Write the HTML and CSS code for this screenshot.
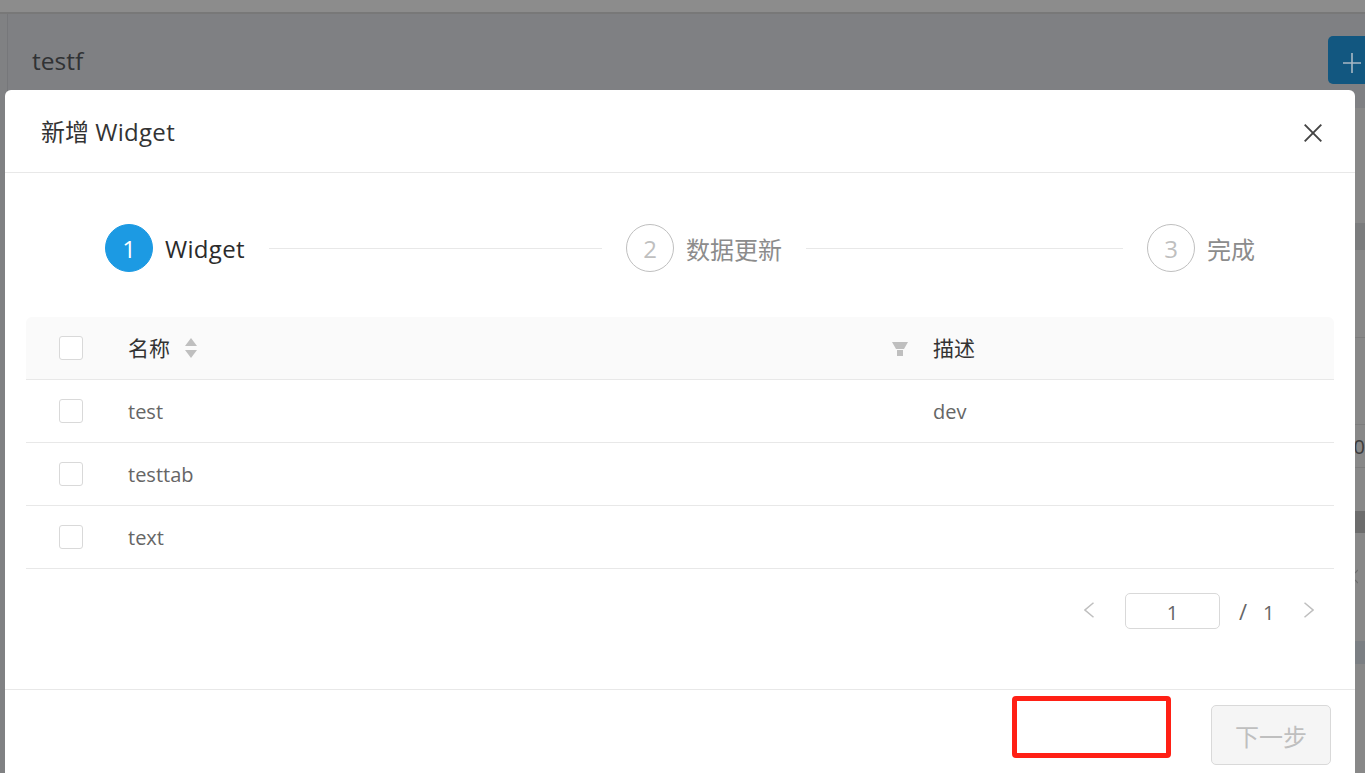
FILE: index.html
```html
<!DOCTYPE html>
<html lang="zh-CN">
<head>
    <meta charset="UTF-8">
    <title>新增 Widget</title>
    <link rel="stylesheet" href="styles.css">
</head>
<body>

    <!-- pagina atras do modal -->
    <div class="backdrop">
        <div class="topbar"></div>
        <div class="page">
            <div class="page-side"></div>
            <div class="page-main">
                <div class="page-head">
                    <span class="page-title">testf</span>
                    <button class="add-btn">
                        <svg width="20" height="20" viewBox="0 0 20 20"><path d="M10 0v20M1 10h18" stroke="#a9b8c4" stroke-width="1.6" fill="none"/></svg>
                    </button>
                </div>
                <div class="band band-a"></div>
                <div class="band band-dark-a"></div>
                <div class="band band-b"></div>
                <div class="band band-c"></div>
                <div class="band band-d"><span class="peek">0</span></div>
                <div class="band band-e"></div>
                <div class="band band-dark-b"></div>
                <div class="band band-f">
                    <svg width="3" height="15" viewBox="0 0 3 15"><path d="M0 4l3-3M0 11l3 3" stroke="#6c6c6c" stroke-width="1.2" fill="none"/></svg>
                </div>
                <div class="band band-blue"></div>
                <div class="band band-g"></div>
            </div>
        </div>
    </div>

    <div class="modal">
        <div class="modal-head">
            <span class="modal-title">新增 <span class="title-latin">Widget</span></span>
            <svg class="modal-close" width="18" height="18" viewBox="0 0 18 18"><path d="M0.7 0.7l16.6 16.6M17.3 0.7L0.7 17.3" stroke="#444" stroke-width="1.9" fill="none"/></svg>
        </div>

        <div class="modal-body">
            <div class="steps">
                <div class="step step-active">
                    <span class="step-num">1</span>
                    <span class="step-label">Widget</span>
                </div>
                <div class="step-line line-one"></div>
                <div class="step">
                    <span class="step-num">2</span>
                    <span class="step-label">数据更新</span>
                </div>
                <div class="step-line line-two"></div>
                <div class="step">
                    <span class="step-num">3</span>
                    <span class="step-label">完成</span>
                </div>
            </div>

            <div class="table">
                <div class="row row-head">
                    <div class="cell-check"><span class="checkbox"></span></div>
                    <div class="cell-name">
                        <span class="head-text">名称</span>
                        <svg class="sort-icon" width="12" height="20" viewBox="0 0 12 20"><path d="M6 0l6 8H0zM6 20l-6-8h12z" fill="#bfbfbf"/></svg>
                        <svg class="filter-icon" width="16" height="14" viewBox="0 0 16 14"><path d="M0 0h16l-4 7H4zM5 8h6v6H5z" fill="#bfbfbf"/></svg>
                    </div>
                    <div class="cell-desc"><span class="head-text">描述</span></div>
                </div>
                <div class="row">
                    <div class="cell-check"><span class="checkbox"></span></div>
                    <div class="cell-name">test</div>
                    <div class="cell-desc">dev</div>
                </div>
                <div class="row">
                    <div class="cell-check"><span class="checkbox"></span></div>
                    <div class="cell-name">testtab</div>
                    <div class="cell-desc"></div>
                </div>
                <div class="row">
                    <div class="cell-check"><span class="checkbox"></span></div>
                    <div class="cell-name">text</div>
                    <div class="cell-desc"></div>
                </div>
            </div>

            <div class="pager">
                <svg class="pager-arrow" width="10" height="16" viewBox="0 0 10 16"><path d="M9.5 0.7L1 8l8.5 7.3" stroke="#bfbfbf" stroke-width="1.5" fill="none"/></svg>
                <input class="pager-input" type="text" value="1">
                <span class="pager-sep">/</span>
                <span class="pager-total">1</span>
                <svg class="pager-arrow" width="10" height="16" viewBox="0 0 10 16"><path d="M0.5 0.7L9 8l-8.5 7.3" stroke="#bfbfbf" stroke-width="1.5" fill="none"/></svg>
            </div>
        </div>

        <div class="modal-foot">
            <button class="next-btn" disabled>下一步</button>
        </div>
    </div>

    <!-- marcacao vermelha da captura -->
    <div class="red-mark"></div>

</body>
</html>
```

FILE: styles.css
```css
* {
    box-sizing: border-box;
    margin: 0;
    padding: 0;
}
html, body {
    height: 100%;
    overflow: hidden;
}
body {
    font-family: "Open Sans", "Noto Sans CJK SC", sans-serif;
    color: #333;
    background-color: #888;
}

/* fundo escurecido */
.backdrop {
    height: 773px;
    display: flex;
    flex-direction: column;
}
.topbar {
    height: 14px;
    background-color: #8c8c8c;
    border-bottom: 2px solid #787878;
}
.page {
    flex: 1;
    display: flex;
}
.page-side {
    width: 8px;
    background-color: #808183;
    border-right: 1px solid #76777a;
}
.page-main {
    flex: 1;
    display: flex;
    flex-direction: column;
}
.page-head {
    height: 94px;
    flex-shrink: 0;
    background-color: #7f8083;
    display: flex;
    justify-content: space-between;
    align-items: flex-start;
    padding: 22px 0 0 24px;
}
.page-title {
    font-size: 24.5px;
    line-height: 50px;
    color: #303234;
}
.add-btn {
    width: 37px;
    height: 48px;
    border: none;
    border-radius: 5px 0 0 5px;
    background-color: #125780;
    display: flex;
    align-items: center;
    padding: 6px 0 0 14px;
}
.band {
    flex-shrink: 0;
    background-color: #888;
    border-bottom: 1px solid #7d7d7d;
}
.band-a { height: 115px; border-bottom: none; }
.band-dark-a { height: 27px; background-color: #7b7c7d; border-bottom: none; }
.band-b { height: 88px; }
.band-c { height: 87px; }
.band-d {
    height: 43px;
    display: flex;
    align-items: center;
    justify-content: flex-end;
}
.band-e { height: 43px; border-bottom: none; }
.band-dark-b { height: 22px; background-color: #6c6c6c; border-bottom: none; }
.band-f {
    height: 108px;
    border-bottom: none;
    display: flex;
    justify-content: flex-end;
    padding: 36px 7px 0 0;
}
.band-blue { height: 23px; background-color: #7b7f83; border-bottom: none; }
.band-g { flex: 1; border-bottom: none; }
.peek {
    font-size: 20px;
    color: #3c3c3c;
}

/* modal */
.modal {
    position: absolute;
    left: 5px;
    top: 90px;
    width: 1350px;
    height: 700px;
    background-color: #fff;
    border-radius: 6px 6px 0 0;
    display: flex;
    flex-direction: column;
}
.modal-head {
    height: 83px;
    flex-shrink: 0;
    border-bottom: 1px solid #e8e8e8;
    display: flex;
    justify-content: space-between;
    align-items: center;
    padding: 0 33px 0 36px;
}
.modal-title {
    font-size: 24px;
    color: #333;
    margin-top: -2px;
}
.title-latin {
    font-weight: 500;
    letter-spacing: 0.3px;
}
.modal-close {
    margin-top: 4px;
}
.modal-body {
    height: 516px;
    flex-shrink: 0;
    padding: 51px 21px 0;
}
.modal-foot {
    flex: 1;
    border-top: 1px solid #e8e8e8;
    display: flex;
    justify-content: flex-end;
    align-items: flex-start;
    padding: 15px 24px 0 0;
}

/* passos */
.steps {
    display: flex;
    align-items: center;
    height: 48px;
    padding-left: 79px;
}
.step {
    display: flex;
    align-items: center;
    flex-shrink: 0;
}
.step-num {
    width: 48px;
    height: 48px;
    border-radius: 50%;
    border: 1px solid #bfbfbf;
    color: #bfbfbf;
    font-size: 24px;
    display: flex;
    align-items: center;
    justify-content: center;
    margin-right: 12px;
}
.step-label {
    font-size: 24px;
    color: #8c8c8c;
}
.step-active .step-num {
    background-color: #1c9ae3;
    border-color: #1c9ae3;
    color: #fff;
}
.step-active .step-label {
    color: #2b2b2b;
    font-weight: 500;
    letter-spacing: 0.3px;
    width: 80px;
}
.step-line {
    height: 1px;
    background-color: #e8e8e8;
    margin: 0 24px;
}
.line-one { width: 333px; margin-left: 24px; }
.line-two { width: 317px; }

/* tabela */
.table {
    margin-top: 45px;
}
.row {
    display: flex;
    align-items: center;
    height: 63px;
    border-bottom: 1px solid #e8e8e8;
    font-size: 20px;
    color: #666;
}
.row-head {
    background-color: #fafafa;
    color: #333;
    border-radius: 6px 6px 0 0;
}
.head-text {
    font-size: 21px;
    margin-top: -2px;
}
.cell-check {
    width: 102px;
    padding-left: 33px;
    display: flex;
}
.checkbox {
    width: 24px;
    height: 24px;
    background-color: #fff;
    border: 1px solid #d9d9d9;
    border-radius: 3px;
}
.cell-name {
    width: 805px;
    display: flex;
    align-items: center;
}
.cell-desc {
    display: flex;
}
.sort-icon {
    margin-left: 15px;
}
.filter-icon {
    margin-left: auto;
    margin-right: 25px;
    margin-top: 2px;
}

/* paginacao */
.pager {
    display: flex;
    align-items: center;
    height: 36px;
    margin-top: 24px;
    padding-left: 1058px;
    font-size: 20px;
    color: #666;
}
.pager-arrow {
    margin-bottom: 2px;
}
.pager-input {
    width: 95px;
    height: 36px;
    margin-left: 31px;
    border: 1px solid #d9d9d9;
    border-radius: 5px;
    text-align: center;
    font-family: inherit;
    font-size: 20px;
    color: #666;
    padding-top: 2px;
}
.pager-sep {
    margin-left: 19px;
    font-size: 22px;
}
.pager-total {
    margin-left: 16px;
    margin-right: 29px;
    padding-top: 2px;
}

.next-btn {
    width: 120px;
    height: 60px;
    background-color: #f5f5f5;
    border: 1px solid #d9d9d9;
    border-radius: 5px;
    color: #bfbfbf;
    font-family: inherit;
    font-size: 24px;
}

.red-mark {
    position: absolute;
    left: 1012px;
    top: 696px;
    width: 159px;
    height: 62px;
    border: 5px solid #ff2015;
    border-radius: 4px;
}
```
